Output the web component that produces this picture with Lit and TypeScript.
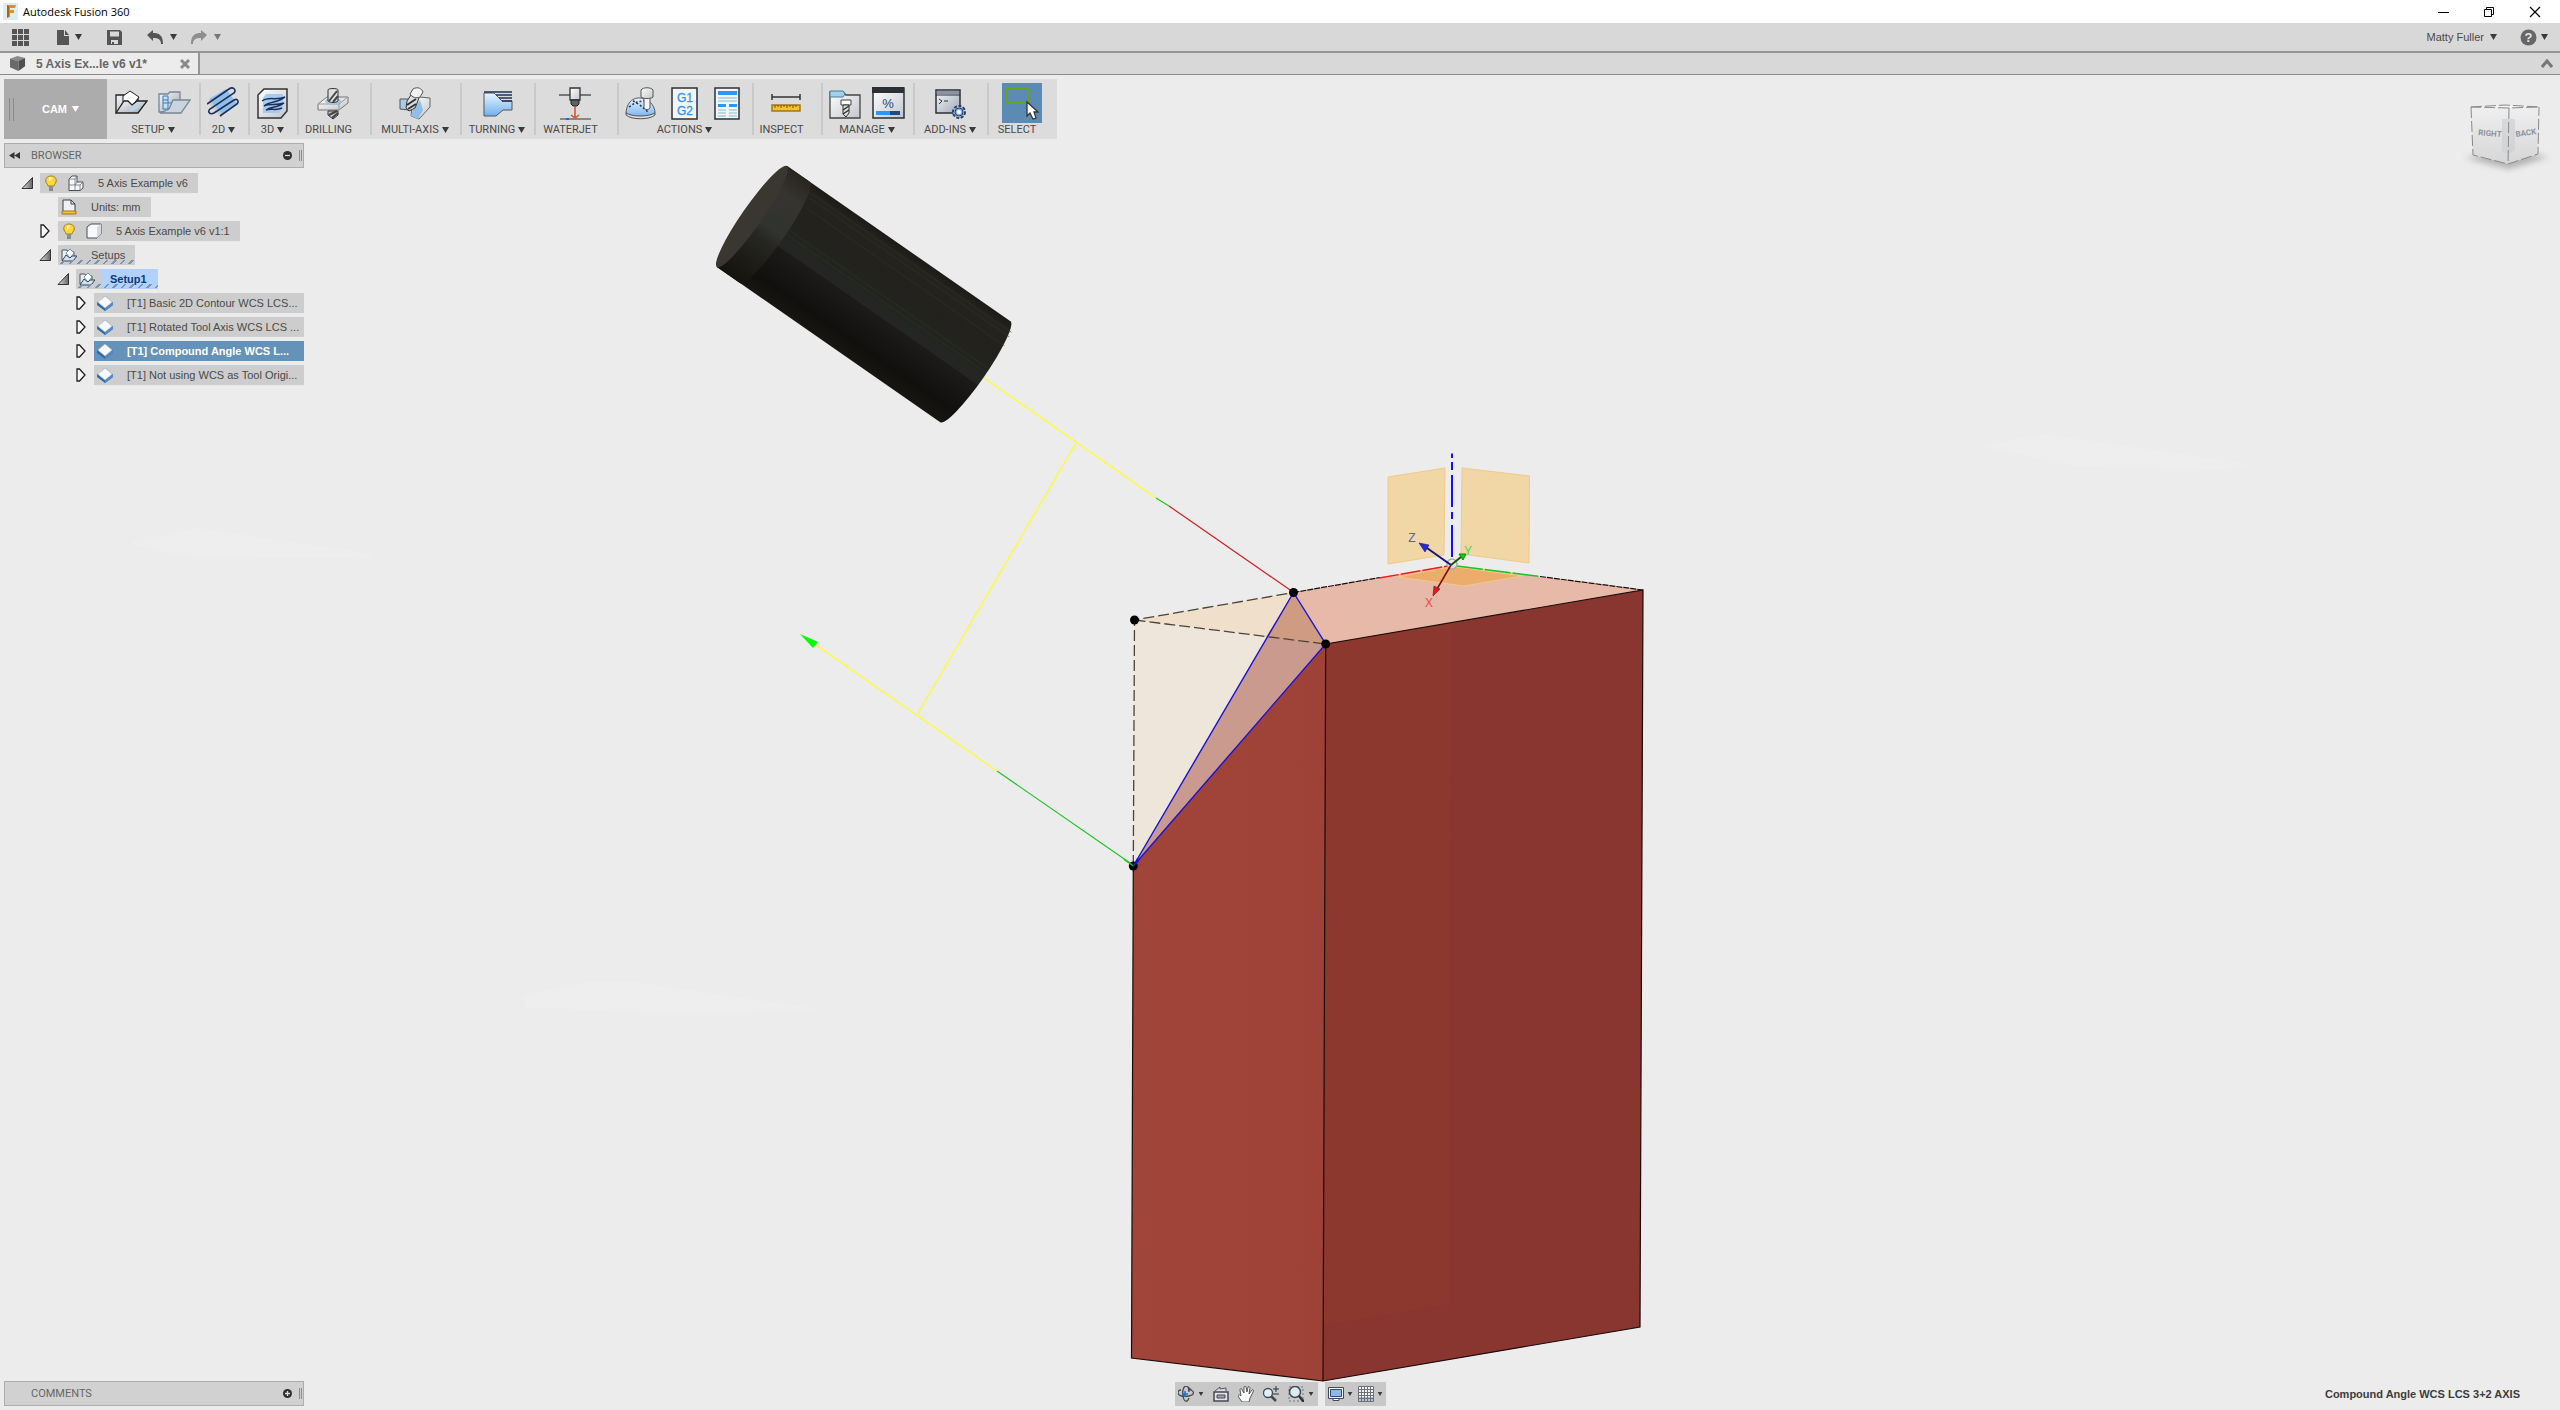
import { LitElement, html, svg, css, nothing, type TemplateResult } from "lit";
import { customElement, state } from "lit/decorators.js";

type Icon = TemplateResult;

interface Tool {
  name: string;
  icon: Icon;
  active?: boolean;
}

interface Group {
  label: string;
  menu: boolean;
  width: number;
  tools: Tool[];
}

interface Node {
  id: string;
  text: string;
  level: number;
  open?: boolean;
  leaf?: boolean;
  bulb?: boolean;
  icon: Icon;
  kind?: "hatch" | "setup" | "op";
}

const icons = {
  grid: svg`<g fill="#555"><path d="M0 0h5v5H0zM6 0h5v5H6zM12 0h5v5h-5zM0 6h5v5H0zM6 6h5v5H6zM12 6h5v5h-5zM0 12h5v5H0zM6 12h5v5H6zM12 12h5v5h-5z"/></g>`,
  file: svg`<path d="M1 1h7v6h5v9H1z" fill="#555"/><path d="M9 1l4 5H9z" fill="#555"/>`,
  save: svg`<path d="M1 1h13l2 2v13H1z" fill="#555"/><path d="M4 2.500h9v5H4z" fill="#d9d9d9"/><path d="M5 11h7v4H5z" fill="#d9d9d9"/><path d="M6 13h2v2H6z" fill="#555"/>`,
  undo: svg`<path d="M0 6l6-5v3c6 0 10 2 10 11h-2c0-5-3-6-8-6v3z" fill="#555"/>`,
  redo: svg`<path d="M16 6l-6-5v3C4 4 0 6 0 15h2c0-5 3-6 8-6v3z" fill="#8e8e8e"/>`,
  docCube: svg`<path d="M0 3l8-3 8 2-6 4z" fill="#8a8a8a"/><path d="M0 3l9 2.500v10.500L0 12z" fill="#6a6a6a"/><path d="M9 5.500L16 2v9l-7 5z" fill="#4f4f4f"/>`,
  setup: svg`
    <path d="M1 8h9l2 3h11v14H1z" fill="url(#steel)" stroke="#222" stroke-width="1.300"/>
    <path d="M8 9l7-5 9 6-7 9-9-4z" fill="#fff" stroke="#222"/>
    <path d="M1 26l8-12h4l4 4 5-4h10l-9 12z" fill="url(#steel)" stroke="#222" stroke-width="1.300"/>
    <path d="M13 17l4 5 8-7-2 6-7 4z" fill="#b9d3ea"/>`,
  setupFolder: svg`
    <path d="M1 7h9l2-2h10v20H1z" fill="url(#steel)" stroke="#788594" stroke-width="1.300"/>
    <path d="M5 9h5v7h5v6H5zM5 13h5M5 16h5M10 16v6" fill="#c4def4" stroke="#3f7db5"/>
    <path d="M2 26l9-4 4-9h17l-9 13z" fill="#c9d4df" stroke="#788594" stroke-width="1.300"/>`,
  mill2d: svg`
    <path d="M2 12v5l13 14v-5z" fill="#c9ccd0"/><path d="M2 12L19 2l12 16-16 9z" fill="#8fbfe9"/><path d="M15 27l16-9v5l-16 8z" fill="#dcdfe2"/>
    <path d="M0 17L22 2c4-3 8 1 5 4L3 22c-3 3 0 6 4 4L27 13c4-2 5 2 3 4L13 29" fill="none" stroke="#1d2f5c" stroke-width="1.600"/>`,
  mill3d: svg`
    <path d="M8 2h23v22l-6 7H2V8z" fill="url(#metal)" stroke="#333" stroke-width="1.500"/>
    <path d="M10 7h17v14l-4 5H7V11z" fill="#a5ccee"/>
    <path d="M6 14C13 9 20 14 29 10C22 16 14 14 8 19M8 19C14 16 20 19 28 16C22 21 16 19 10 23M10 23C15 21 20 24 26 21" fill="none" stroke="#1d2f5c" stroke-width="1.500"/>`,
  drill: svg`
    <path d="M1 17l9-7h21v6l-9 7H1z" fill="url(#metal)" stroke="#777"/><path d="M1 17h21l9-7M22 17v6" fill="none" stroke="#999"/>
    <ellipse cx="16" cy="14" rx="8" ry="3.500" fill="#9ac6ec"/>
    <path d="M11 3c0-2 10-2 10 0v11c-2 2-8 2-10 0z" fill="#dedede" stroke="#333"/><path d="M12 14l8-10M16 15l5-6" stroke="#444" stroke-width="2"/>
    <path d="M11 24h10v4l-5 4-5-4z" fill="#c9c9c9" stroke="#333"/><path d="M12 28l8-4M15 31l6-5" stroke="#444" stroke-width="2"/>`,
  multi: svg`
    <path d="M1 12h14l5 8-3 4L1 22z" fill="#a9cbe8" stroke="#555"/><path d="M14 12l6-2 11 1v9L20 32l-8-3z" fill="url(#metal)" stroke="#666"/>
    <path d="M14 22l7-9 3 10-5 9-7-3z" fill="#8fbfe9"/>
    <path d="M8 14l4-6 8 3-4 10-6 3-3-3z" fill="#ddd" stroke="#333"/><path d="M9 22l8-5M8 18l9-6" stroke="#333" stroke-width="2"/>
    <path d="M11 7l3-5c5-3 9 0 10 3l-3 5c-4 2-8 0-10-3z" fill="#f2f2f2" stroke="#555"/>`,
  turning: svg`
    <path d="M3 6h12l7 8h9v9h-9l-7 6H3z" fill="url(#sky)"/><path d="M3 6h10l8 8h10v9h-9l-7 6H3z" fill="none" stroke="#555"/>
    <path d="M3 5h28M15 8h16M18 11h13M21 14h10" stroke="#1d2f5c" stroke-width="1.500"/>`,
  waterjet: svg`
    <path d="M0 8h32" stroke="#555" stroke-width="1.500"/><path d="M11 1h10v12H11z" fill="url(#metal)" stroke="#333" stroke-width="1.300"/>
    <path d="M12 13h8v4l-2 2h-4l-2-2z" fill="#59616b" stroke="#222"/><path d="M16 19v11M12 28l4 3 4-3" stroke="#dd4b22" stroke-width="1.500" fill="none"/>
    <path d="M1 32h31" stroke="#888" stroke-width="2"/><path d="M7 32h3" stroke="#1c6fc4" stroke-width="2"/>`,
  simulate: svg`
    <path d="M1 26C2 12 12 9 19 12c7 2 11 8 11 14-5 7-24 7-29 0z" fill="url(#sky)" stroke="#555"/>
    <path d="M1 26c6 4 22 4 29 0v2c-5 5-24 5-29 0z" fill="#ddd" stroke="#555"/>
    <path d="M4 20c6-4 8-6 16-6M8 14c5 2 12 8 16 12" stroke="#1d2f5c" stroke-width="1.500" stroke-dasharray="2 2" fill="none"/>
    <path d="M19 10h6v11c-1 2-5 2-6 0z" fill="#f4f4f4" stroke="#555"/><path d="M16 3c2-3 10-3 12 0v7c-2 2-10 2-12 0z" fill="url(#metal)" stroke="#555"/>`,
  post: svg`
    <path d="M4 1h25v31H4z" fill="#f4f5f7" stroke="#2b2f36" stroke-width="1.500"/>
    <text x="17" y="15" text-anchor="middle" font-size="12" fill="#2d96fb" stroke="#2d96fb" stroke-width="0.300">G1</text>
    <text x="17" y="28" text-anchor="middle" font-size="12" fill="#2d96fb" stroke="#2d96fb" stroke-width="0.300">G2</text>`,
  sheet: svg`
    <path d="M4 1h24v31H4z" fill="#f4f5f7" stroke="#2b2f36" stroke-width="1.500"/>
    <path d="M7 4h19v4H7zM7 17h8v3H7zM18 17h8v3h-8z" fill="#2d96fb"/>
    <path d="M7 11h19M7 14h19M7 23h8M18 23h8M7 26h8M18 26h8M7 29h8M18 29h8" stroke="#7fbcc9"/>`,
  inspect: svg`
    <path d="M2 10h28M2 7v6M30 7v6" stroke="#333" stroke-width="1.500"/>
    <path d="M2 18h28v6H2z" fill="#f2c230" stroke="#a4741a" stroke-width="1.500"/><path d="M5 18v3M8 18v2M11 18v3M14 18v2M17 18v3M20 18v2M23 18v3M26 18v2" stroke="#7a5200"/>`,
  library: svg`
    <path d="M1 5h13l3 3h14v23H1z" fill="url(#metal)" stroke="#444" stroke-width="1.300"/><path d="M1 4h13l2 3-2 3H1z" fill="#9fd3ec" stroke="#4d7c92"/>
    <path d="M12 13h10v5H12z" fill="#fff" stroke="#444"/><path d="M14 18h6v8l-3 4-3-3z" fill="#ddd" stroke="#333"/><path d="M14 23l6-4M14 27l6-4" stroke="#333" stroke-width="1.500"/>`,
  template: svg`
    <path d="M1 1h31v30H1z" fill="url(#metal)" stroke="#2b2f36" stroke-width="1.500"/><path d="M0 0h32v6H0z" fill="#2b2f36"/>
    <text x="16" y="21" text-anchor="middle" font-size="13" fill="#234b78">%</text>
    <path d="M4 24h14v4H4z" fill="#2d96fb"/><path d="M18 24h10v4H18z" fill="#234b78"/>`,
  addins: svg`
    <path d="M2 3h24v23H2z" fill="url(#steel)" stroke="#2b2f36" stroke-width="1.500"/><path d="M3 4h22v3H3z" fill="#8d93a6"/><path d="M2 8h24" stroke="#2b2f36"/>
    <path d="M5 12l3 2-3 3M10 14h4" stroke="#333" fill="none"/>
    <circle cx="25" cy="25" r="6" fill="#a9c4ea" stroke="#26406b" stroke-width="2" stroke-dasharray="3 1.500"/><circle cx="25" cy="25" r="4" fill="#8fb1e2" stroke="#26406b"/><circle cx="25" cy="25" r="2" fill="#fff"/>`,
  select: svg`
    <path d="M1 1h21v15H1z" fill="none" stroke="#69a512" stroke-width="1.800"/>
    <path d="M21 15v14l3-3 3 6 3-1-2-6h4z" fill="#fff" stroke="#333" stroke-width="1.300"/>`,
  bulb: svg`<path d="M8 1c4 0 6 3 5 6-1 2-2 3-2 4H5c0-1-1-2-2-4C2 4 4 1 8 1z" fill="#ffd83d" stroke="#9a7a1c"/><path d="M6 3c1-1 2-1 3 0L6 7z" fill="#fffbe0"/><path d="M6 11h4v3H6z" fill="#8a8f98"/><path d="M6 15h4" stroke="#444"/>`,
  assembly: svg`<path d="M1 4l3-3h5v6h6v6l-3 2.500H1z" fill="#f7f8fa" stroke="#4a4f57"/><path d="M7 15.500V4l2-3M1 4h6M1 10h11v5.500M12 10l3-3M7 10l2-3" fill="none" stroke="#6a6f77" stroke-width="0.800"/>`,
  units: svg`<path d="M2 1h8l4 4v8H2z" fill="#f0f1f5" stroke="#3a3f47"/><path d="M10 1v4h4" fill="none" stroke="#3a3f47"/><path d="M1 12h14v3H1z" fill="#f2c230" stroke="#a4741a"/>`,
  body: svg`<path d="M1 4l4-3h10v10l-4 4H1z" fill="#f8f9fb" stroke="#4a4f57"/><path d="M11 15l4-4V1l-4 3z" fill="#d5d8dd"/>`,
  setupSmall: svg`<path d="M1 3h5l1 2h6v8H1z" fill="#e7edf3" stroke="#4a5667"/><path d="M5 6l4-4 4 4-4 5z" fill="#fff" stroke="#6d8fb5"/><path d="M1 14l4-6 4 3 2-2h5l-4 5z" fill="#cfe0ee" stroke="#3c4653"/>`,
  op: svg`<path d="M0 7l8 6 8-6v3l-8 6-8-6z" fill="#2f6aa8"/><path d="M8 13l8-6v3l-8 6z" fill="#4f8ac6"/><path d="M1 7l7-6 7 6-7 6z" fill="#fafafa" stroke="#a9bccd" stroke-width="0.800"/>`,
  orbit: svg`<g fill="none" stroke="#444b55" stroke-width="1.300"><path d="M11 12c-2 5-5 4-6-2S6 0 8 0s3 3 3 6"/><path d="M13 4c4 2 3 5-2 6s-11 0-11-3 2-3 3-3"/></g><path d="M7 5v6M4 8h6" stroke="#1c6fc4" stroke-width="1.500"/><path d="M11 1l3 3-4 1z" fill="#444b55"/>`,
  look: svg`<path d="M1 6h14v9H1z" fill="#e3e3e3" stroke="#444b55" stroke-width="1.500"/><path d="M4 9h8v3H4z" fill="#9aa6b5" stroke="#444b55"/><path d="M2 5l5-4v2l6-1v3" fill="#d5dbe0" stroke="#444b55" stroke-width="0.900"/>`,
  pan: svg`<path d="M4 16l-4-6c0-2 2-1 3 0L2 4c0-2 2-2 2 0l2 3V1c0-1 2-1 2 0l1 5 1-5c1-1 2 0 2 1l-1 6 3-4c1-1 2 0 1 2l-3 6-1 4z" fill="#fff" stroke="#444b55" stroke-width="0.900"/>`,
  zoom: svg`<circle cx="5" cy="7" r="4.500" fill="#e2f0f6" stroke="#444b55" stroke-width="1.300"/><path d="M8 10l5 5" stroke="#444b55" stroke-width="2.500"/><path d="M13 0v6M10 3h6M10 8h6" stroke="#333"/>`,
  fit: svg`<path d="M1 1h14v14H1z" fill="none" stroke="#777" stroke-dasharray="2 2"/><circle cx="7" cy="6" r="5.500" fill="#d8ecf2" stroke="#444b55" stroke-width="1.500"/><path d="M11 10l5 6" stroke="#333" stroke-width="2.500"/>`,
  display: svg`<path d="M.5 1.500h15v11H.5z" fill="#f2f2f2" stroke="#444b55"/><path d="M2.500 3.500h11v7h-11z" fill="#8fb8e8" stroke="#2a4d86"/><path d="M5 12.500h6v2H5z" fill="#fff" stroke="#444b55"/>`,
  gridView: svg`<path d="M0 0h16v16H0z" fill="#f4f4f4"/><path d="M0 11h16v5H0z" fill="#b9c1d0"/><path d="M.5 .5h15v15H.5zM3.500 0v16M6.500 0v16M9.500 0v16M12.500 0v16M0 3.500h16M0 6.500h16M0 9.500h16M0 12.500h16" fill="none" stroke="#6b7078"/>`,
};

const groups: Group[] = [
  { label: "SETUP", menu: true, width: 92, tools: [{ name: "New Setup", icon: icons.setup }, { name: "New Folder", icon: icons.setupFolder }] },
  { label: "2D", menu: true, width: 49, tools: [{ name: "2D milling", icon: icons.mill2d }] },
  { label: "3D", menu: true, width: 49, tools: [{ name: "3D milling", icon: icons.mill3d }] },
  { label: "DRILLING", menu: false, width: 73, tools: [{ name: "Drill", icon: icons.drill }] },
  { label: "MULTI-AXIS", menu: true, width: 90, tools: [{ name: "Multi-axis milling", icon: icons.multi }] },
  { label: "TURNING", menu: true, width: 74, tools: [{ name: "Turning profile", icon: icons.turning }] },
  { label: "WATERJET", menu: false, width: 83, tools: [{ name: "Cut", icon: icons.waterjet }] },
  { label: "ACTIONS", menu: true, width: 135, tools: [{ name: "Simulate", icon: icons.simulate }, { name: "Post Process", icon: icons.post }, { name: "Setup Sheet", icon: icons.sheet }] },
  { label: "INSPECT", menu: false, width: 69, tools: [{ name: "Measure", icon: icons.inspect }] },
  { label: "MANAGE", menu: true, width: 92, tools: [{ name: "Tool Library", icon: icons.library }, { name: "Template Library", icon: icons.template }] },
  { label: "ADD-INS", menu: true, width: 74, tools: [{ name: "Scripts and Add-Ins", icon: icons.addins }] },
  { label: "SELECT", menu: false, width: 70, tools: [{ name: "Select items", icon: icons.select, active: true }] },
];

const nodes: Node[] = [
  { id: "root", text: "5 Axis Example v6", level: 0, open: true, bulb: true, icon: icons.assembly },
  { id: "units", text: "Units: mm", level: 1, leaf: true, icon: icons.units },
  { id: "comp", text: "5 Axis Example v6 v1:1", level: 1, bulb: true, icon: icons.body },
  { id: "setups", text: "Setups", level: 1, open: true, icon: icons.setupSmall, kind: "hatch" },
  { id: "setup1", text: "Setup1", level: 2, open: true, icon: icons.setupSmall, kind: "setup" },
  { id: "op1", text: "[T1] Basic 2D Contour WCS LCS...", level: 3, icon: icons.op, kind: "op" },
  { id: "op2", text: "[T1] Rotated Tool Axis WCS LCS ...", level: 3, icon: icons.op, kind: "op" },
  { id: "op3", text: "[T1] Compound Angle WCS L...", level: 3, icon: icons.op, kind: "op" },
  { id: "op4", text: "[T1] Not using WCS as Tool Origi...", level: 3, icon: icons.op, kind: "op" },
];

const caret = html`<svg class="caret" viewBox="0 0 7 6" aria-hidden="true"><path d="M0 0h7L3.500 6z" fill="currentColor" /></svg>`;
const noCaret = html`<span class="caret"></span>`;
const small = (i: Icon, name = "i16") => html`<svg class=${name} viewBox="0 0 17 17" aria-hidden="true">${i}</svg>`;

@customElement("app-root")
export class AppRoot extends LitElement {
  @state() private selected = "op3";

  static styles = css`
    :host {
      display: block;
      font: 11px/14px "Liberation Sans", Arial, sans-serif;
      color: #4a4a4a;
    }
    * { box-sizing: border-box; }
    button {
      font: inherit;
      color: inherit;
      background: none;
      border: 0;
      padding: 0;
      margin: 0;
      display: flex;
      align-items: center;
      white-space: nowrap;
    }
    svg { display: block; flex: none; }
    .app { display: flex; flex-direction: column; height: 100vh; background: #ececec; }
    .caret { width: 7px; height: 6px; flex: none; color: #3a3a3a; }
    .i16 { width: 17px; height: 17px; }
    .i15 { width: 16px; height: 16px; }
    .narrow { font-family: Roboto, "Liberation Sans", sans-serif; font-size: 11px; }

    .title { height: 23px; flex: none; display: flex; align-items: center; background: #fff; padding: 0 9px 0 3px; gap: 5px; color: #000; }
    .title h1 { margin: 0; flex: 1; font: 11px/16px "Open Sans", "Noto Sans", sans-serif; }
    .logo { width: 15px; height: 17px; }
    .win { display: flex; gap: 24px; }
    .win svg { width: 22px; height: 12px; }

    .quick { height: 30px; flex: none; display: flex; align-items: center; background: #d8d8d8; border-bottom: 2px solid #969696; padding: 0 12px; }
    .quick button { gap: 6px; }
    .tools { display: flex; flex: 1; align-items: center; gap: 24px; }
    .tools .file { padding-left: 3px; gap: 2px; }
    .tools .last .caret { color: #777; }
    .tools .history { display: flex; gap: 14px; }
    .account { display: flex; align-items: center; gap: 23px; }
    .account .help { gap: 4px; }

    .tabs { height: 22px; flex: none; display: flex; align-items: center; justify-content: space-between; background: #d8d8d8; border-bottom: 1px solid #8c8c8c; padding-right: 7px; }
    .tab { height: 21px; width: 200px; display: flex; align-items: center; gap: 10px; padding: 0 8px 0 10px; background: #ececec; border-right: 2px solid #969696; font-weight: bold; font-size: 12px; color: #666; }
    .tab .name { flex: 1; }
    .tab .x { width: 10px; height: 10px; }
    .chev { width: 12px; height: 9px; }

    .work { position: relative; flex: 1; min-height: 0; display: flex; flex-direction: column; padding: 4px; }
    .scene { position: absolute; inset: 0; width: 100%; height: 100%; }
    .over { position: relative; }

    .ribbon { align-self: flex-start; display: flex; height: 60px; background: #dcdcdc; }
    .workspace { width: 103px; background: #acacac; color: #fff; font-weight: bold; padding-left: 5px; }
    .grip { width: 5px; height: 23px; border: solid #8b8b8b; border-width: 0 1px; }
    .workspace .label { flex: 1; display: flex; align-items: center; justify-content: center; gap: 5px; font-size: 11px; }
    .workspace .caret { color: #fff; }
    .group { display: flex; flex-direction: column; align-items: center; padding-top: 4px; }
    .group + .group { background: linear-gradient(#c9c9c9, #c9c9c9) 0 4px / 2px 52px no-repeat; }
    .row { height: 40px; display: flex; align-items: center; gap: 10px; }
    .row svg { width: 33px; height: 33px; }
    .row .active { width: 40px; height: 40px; justify-content: center; background: #5b8ab5; }
    .group .menu { gap: 3px; height: 14px; }

    .main { flex: 1; min-height: 0; display: flex; justify-content: space-between; padding-top: 4px; }
    .browser { width: 300px; }
    .bar { height: 25px; display: flex; align-items: center; border: 1px solid #adadad; background: #d1d1d1; padding: 0 1px 0 4px; color: #666; }
    .bar h2 { margin: 0; flex: 1; font-weight: normal; line-height: 14px; }
    .bar .fold { width: 22px; }
    .bar .fold svg { width: 11px; height: 7px; }
    .bar .round { width: 9px; height: 9px; margin-right: 7px; }
    .bar .edge { width: 3px; height: 11px; border: solid #8b8b8b; border-width: 0 1px; }
    .tree { list-style: none; margin: 0; padding: 5px 0 0 16px; display: grid; gap: 4px; }
    .tree li { display: flex; height: 20px; }
    .l1 { padding-left: 18px; }
    .l2 { padding-left: 36px; }
    .l3 { padding-left: 54px; }
    .twist { width: 20px; height: 20px; flex: none; padding-left: 1px; }
    .twist svg { width: 12px; height: 14px; }
    .item { position: relative; height: 20px; background: #cdcdcd; padding: 0 10px 0 3px; }
    .item .bulb { margin-right: 9px; }
    .item .text { margin-left: 14px; }
    .item.op { flex: 1; padding-right: 4px; }
    .item.sel { background: #6592b8; color: #fff; font-weight: bold; }
    .item.setup { padding-right: 0; }
    .item.setup .text { margin-left: 6px; padding: 3px 11px 3px 9px; background: #b1d2ff; color: #0f3878; font-weight: bold; }
    .hatch::after {
      content: "";
      position: absolute;
      left: 0; right: 0; bottom: 1px;
      height: 4px;
      background: repeating-linear-gradient(135deg, transparent 0 4px, #7d92b4 4px 6px);
    }
    .cube { width: 110px; height: 80px; margin-top: -42px; }
    .cube text { font: bold 8px Roboto, "Liberation Sans", sans-serif; }

    .foot { display: grid; grid-template-columns: 1fr auto 1fr; align-items: center; }
    .foot .bar { width: 300px; padding-left: 26px; }
    .nav { display: flex; gap: 7px; }
    .nav > div { display: flex; align-items: center; height: 24px; background: #c8c8c8; padding: 0 4px 0 3px; gap: 9px; }
    .nav .view { gap: 5px; padding-right: 3px; }
    .nav button { gap: 4px; }
    .nav .view button { gap: 3px; }
    .nav .caret { width: 6px; height: 4px; }
    .status { justify-self: end; padding-right: 36px; font-weight: bold; color: #3c3c3c; }
  `;

  private scene() {
    return html`<svg class="scene" viewBox="0 75 2560 1335" preserveAspectRatio="xMidYMid slice" role="img" aria-label="Machining scene">
      <defs>
        <linearGradient id="steel" x1="0" y1="0" x2="1" y2="1"><stop offset="0" stop-color="#f6f7fa" /><stop offset="1" stop-color="#9fa8b6" /></linearGradient>
        <linearGradient id="metal" x1="0" y1="0" x2="1" y2="1"><stop offset="0" stop-color="#ffffff" /><stop offset="1" stop-color="#c2c6cd" /></linearGradient>
        <linearGradient id="sky" x1="0" y1="0" x2="0" y2="1"><stop offset="0" stop-color="#e9f4ff" /><stop offset="1" stop-color="#6fb0ee" /></linearGradient>
        <linearGradient id="tw" x1="0" y1="0" x2="1" y2="0"><stop offset="0" stop-color="#e0e0e0" /><stop offset="1" stop-color="#666" /></linearGradient>
        <linearGradient id="cubeSide" x1="0" y1="0" x2="0" y2="1"><stop offset="0" stop-color="#efefef" /><stop offset="1" stop-color="#d6d6d6" /></linearGradient>
        <linearGradient id="barrel" gradientUnits="userSpaceOnUse" x1="0" y1="-62" x2="0" y2="62">
          <stop offset="0" stop-color="#1b1a16" /><stop offset=".08" stop-color="#25231e" /><stop offset=".3" stop-color="#22211d" />
          <stop offset=".44" stop-color="#22241f" /><stop offset=".5" stop-color="#242624" /><stop offset=".57" stop-color="#242524" />
          <stop offset=".58" stop-color="#1c1b1a" /><stop offset=".86" stop-color="#11100e" /><stop offset="1" stop-color="#171612" />
        </linearGradient>
        <linearGradient id="collar" gradientUnits="userSpaceOnUse" x1="0" y1="-62" x2="0" y2="62">
          <stop offset="0" stop-color="#28251f" /><stop offset=".2" stop-color="#36342f" /><stop offset=".5" stop-color="#30332f" />
          <stop offset=".6" stop-color="#262622" /><stop offset="1" stop-color="#14130e" />
        </linearGradient>
        <linearGradient id="leftFace" x1="0" y1="0" x2="1" y2="0"><stop offset="0" stop-color="#a1453a" /><stop offset="1" stop-color="#9e4238" /></linearGradient>
      </defs>
      <g fill="#eeeeee">
        <path d="M523 995l64-13h46l192 28-30 2-145 1-123-6z" />
        <path d="M130 543l65-15 180 26-10 5-190-3z" />
        <path d="M1980 446l65-12 205 30-25 6-150-4z" />
      </g>

      <path d="M983 377L1156 498M1076 443L917 715M816 645L997 771" stroke="#ffff1e" stroke-width="1.200" fill="none" />
      <path d="M1156 498L1169 506M997 771L1133 865" stroke="#1fc41f" stroke-width="1.200" />
      <path d="M1169 506L1293 592" stroke="#d02020" stroke-width="1.200" />
      <path d="M800 634L818 642L813 648z" fill="#0f0" />

      <g transform="translate(752 216.500) rotate(34.800)">
        <path d="M0 -61.500H272A10 61.500 0 0 1 272 61.500H0z" fill="url(#barrel)" />
        <path d="M0 -61.500H28A10 61.500 0 0 1 28 61.500H0z" fill="url(#collar)" />
        <path d="M37 -48H280M36 -53H279M38 -38H281M38 -10H281M38 -5H281" stroke="#343229" stroke-width="0.800" opacity=".7" />
        <ellipse rx="10" ry="61.500" fill="#3a3731" />
      </g>

      <path d="M1134.500 620L1293.500 592.500L1325.700 644z" fill="#f0dfcb" />
      <path d="M1134.500 620L1325.700 644L1133.300 866z" fill="#eee6da" />
      <path d="M1293.500 592.500L1451.500 565L1643 590L1325.700 644z" fill="#e6b9a9" />
      <path d="M1133.300 866L1325.700 644L1323 1381L1131.500 1358z" fill="url(#leftFace)" />
      <path d="M1325.700 644L1643 590L1640 1327L1323 1381z" fill="#8a3630" />
      <path d="M1325.700 644L1451 623L1449 1304L1324 1325z" fill="#8c382f" />
      <path d="M1293.500 592.500L1325.700 644L1133.300 866z" fill="#cb9a8e" />
      <path d="M1293.500 592.500L1325.700 644L1266 637z" fill="#d09b83" />

      <g stroke="#1a0a08" fill="none" stroke-width="1.200">
        <path d="M1325.700 644L1643 590L1640 1327L1323 1381L1131.500 1358L1133.300 866M1325.700 644L1323 1381" />
        <path d="M1293.500 592.500L1380 577.500M1540 576.500L1643 590" stroke-dasharray="6 1" />
      </g>
      <path d="M1133.300 866L1134.500 620L1293.500 592.500M1134.500 620L1325.700 644" fill="none" stroke="#4a443c" stroke-width="1.300" stroke-dasharray="11 4" />
      <path d="M1293.500 592.500L1325.700 644L1133.300 866z" fill="none" stroke="#1414d8" stroke-width="1.400" />
      <circle cx="1293.500" cy="592.500" r="4.500" /><circle cx="1134.500" cy="620" r="4.500" /><circle cx="1325.700" cy="644" r="4.500" /><circle cx="1133.300" cy="866" r="4.500" />
      <path d="M1124 859.500L1133.500 866" stroke="#1fc41f" stroke-width="1.500" /><path d="M1133 867L1138 858M1133 867L1139 860" stroke="#1414d8" stroke-width="1.500" />

      <g fill="#f6c05f" fill-opacity=".5" stroke="#f3c987" stroke-width="1">
        <path d="M1388 477L1445 468L1444 555L1388 564z" /><path d="M1462 468L1529.500 476L1529 563L1461 554z" />
        <path d="M1398 577L1444 568L1457 567L1522 576L1464 586z" fill="#f0a030" />
      </g>
      <path d="M1452 453.500V458M1452 462V470M1452 475V507M1452 512V519M1452 525V557" stroke="#1010f5" stroke-width="2" />
      <path d="M1379 578L1448 566" stroke="#ee1c1c" stroke-width="1.400" stroke-dasharray="20 2" />
      <path d="M1457 566L1540 576.500" stroke="#18c818" stroke-width="1.400" stroke-dasharray="26 2" />
      <circle cx="1452" cy="564" r="5" fill="#eee" fill-opacity=".6" stroke="#aaa" stroke-width="1.500" />
      <path d="M1451 565L1427 548" stroke="#16166e" stroke-width="2" /><path d="M1419 543L1429 545L1425 552z" fill="#2a2ad0" stroke="#16166e" stroke-width="0.600" />
      <path d="M1451 565L1461 557" stroke="#0b5a0b" stroke-width="2" /><path d="M1466 554L1459 554L1463 560z" fill="#0bd20b" stroke="#0b8a0b" />
      <path d="M1451 565L1437 589" stroke="#7a0d0d" stroke-width="1.500" /><path d="M1433 596L1434 586L1440 589z" fill="#e01c1c" stroke="#7a0d0d" stroke-width="0.600" />
      <g font-size="12" text-anchor="middle">
        <text x="1412" y="542" fill="#5656d8">Z</text><text x="1468" y="555" fill="#3ce03c">Y</text><text x="1429" y="607" fill="#f04a3c">X</text>
      </g>
    </svg>`;
  }

  private group(g: Group) {
    return html`<div class="group" style="width:${g.width}px">
      <div class="row">
        ${g.tools.map((t) => html`<button class=${t.active ? "active" : "tool"} title=${t.name} aria-label=${t.name}>
          <svg viewBox="0 0 33 33" aria-hidden="true">${t.icon}</svg>
        </button>`)}
      </div>
      <button class="menu narrow">${g.label}${g.menu ? caret : noCaret}</button>
    </div>`;
  }

  private node(n: Node) {
    const selected = n.id === this.selected;
    const hatch = n.kind === "hatch" || n.kind === "setup";
    const twist = n.open
      ? html`<svg viewBox="0 0 12 14"><path d="M1 12.500L11.500 1.500V12.500z" fill="url(#tw)" stroke="#333" /></svg>`
      : html`<svg viewBox="0 0 12 14"><path d="M2 1h2.500L10 7L4.500 13H2z" fill="#f8f8f8" stroke="#222" stroke-width="1.300" /></svg>`;
    return html`<li class="l${n.level}">
      ${n.leaf ? html`<span class="twist"></span>` : html`<button class="twist" aria-label="Expand ${n.text}">${twist}</button>`}
      <button class="item ${n.kind ?? ""} ${hatch ? "hatch" : ""} ${selected ? "sel" : ""}" @click=${() => (this.selected = n.id)}>
        ${n.bulb ? html`<svg class="i15 bulb" viewBox="0 0 16 16">${icons.bulb}</svg>` : nothing}
        <svg class="i15" viewBox="0 0 16 16">${n.icon}</svg>
        <span class="text">${n.text}</span>
      </button>
    </li>`;
  }

  private navButton(icon: Icon, name: string, menu = false) {
    return html`<button aria-label=${name}><svg class="i15" viewBox="0 0 16 16">${icon}</svg>${menu ? caret : nothing}</button>`;
  }

  render() {
    return html`<div class="app">
      <header class="title">
        <svg class="logo" viewBox="0 0 15 17" aria-hidden="true"><path d="M0 0h15v17H0z" fill="#d9eef6" /><path d="M4 2h9l-1 3H7v2h4v3H7v4l-3 1z" fill="#e8892b" /><path d="M4 2l2 1v10l-2 2z" fill="#b75f14" /></svg>
        <h1>Autodesk Fusion 360</h1>
        <div class="win">
          <button aria-label="Minimize"><svg viewBox="0 0 22 12"><path d="M1 6.500h11" stroke="#000" /></svg></button>
          <button aria-label="Restore"><svg viewBox="0 0 22 12"><path d="M1.500 3.500h7v7h-7zM3.500 3.500v-2h7v7h-2" fill="none" stroke="#000" /></svg></button>
          <button aria-label="Close"><svg viewBox="0 0 22 12"><path d="M1 1l10 10M11 1L1 11" stroke="#000" stroke-width="1.200" /></svg></button>
        </div>
      </header>

      <nav class="quick" aria-label="Quick access">
        <div class="tools">
          <button aria-label="Data panel">${small(icons.grid)}</button>
          <button class="file" aria-label="File">${small(icons.file)}${caret}</button>
          <button aria-label="Save">${small(icons.save)}</button>
          <div class="history">
            <button aria-label="Undo">${small(icons.undo)}${caret}</button>
            <button class="last" aria-label="Redo">${small(icons.redo)}${caret}</button>
          </div>
        </div>
        <div class="account">
          <button>Matty Fuller${caret}</button>
          <button class="help" aria-label="Help"><svg class="i16" viewBox="0 0 17 17"><circle cx="8.500" cy="8.500" r="8" fill="#666" /><text x="8.500" y="13" text-anchor="middle" font-size="13" font-weight="bold" fill="#e4e4e4">?</text></svg>${caret}</button>
        </div>
      </nav>

      <div class="tabs">
        <div class="tab">${small(icons.docCube, "i15")}<span class="name">5 Axis Ex...le v6 v1*</span>
          <button aria-label="Close tab"><svg class="x" viewBox="0 0 10 10"><path d="M1 1l8 8M9 1L1 9" stroke="#8a8a8a" stroke-width="3" /></svg></button>
        </div>
        <button aria-label="Collapse"><svg class="chev" viewBox="0 0 12 9"><path d="M1 8l5-6 5 6" fill="none" stroke="#777" stroke-width="3" /></svg></button>
      </div>

      <main class="work">
        ${this.scene()}
        <div class="ribbon over">
          <button class="workspace"><span class="grip"></span><span class="label">CAM${caret}</span></button>
          ${groups.map((g) => this.group(g))}
        </div>
        <div class="main over">
          <section class="browser">
            <div class="bar">
              <button class="fold" aria-label="Collapse browser"><svg viewBox="0 0 11 7"><path d="M5.500 0v7L0 3.500zM11 0v7L5.500 3.500z" fill="#333" /></svg></button>
              <h2 class="narrow">BROWSER</h2>
              <button aria-label="Minimize browser"><svg class="round" viewBox="0 0 9 9"><circle cx="4.500" cy="4.500" r="4.500" fill="#2e2e2e" /><path d="M2 4.500h5" stroke="#ddd" stroke-width="1.300" /></svg></button>
              <span class="edge"></span>
            </div>
            <ul class="tree">${nodes.map((n) => this.node(n))}</ul>
          </section>
          <svg class="cube" viewBox="-5 0 110 80" role="img" aria-label="View cube">
            <defs><filter id="soft" x="-20%" y="-50%" width="140%" height="200%"><feGaussianBlur stdDeviation="3" /></filter></defs>
            <path d="M14 57L61 49L97 56L58 68z" fill="#999" opacity=".7" filter="url(#soft)" />
            <path d="M20 6L58 7L57 63L22 54z" fill="url(#cubeSide)" /><path d="M58 7L88 6L87 53L57 63z" fill="url(#cubeSide)" />
            <path d="M20 6L54 4L88 6L58 7z" fill="#f2f2f2" />
            <path d="M51 18L64 18L64 49L57 53L51 51z" fill="#cdd0d6" opacity=".7" />
            <path d="M20 6L54 4L88 6L58 7zM20 6L22 54L57 63L87 53L88 6M58 7L57 63" fill="none" stroke="#8a8a8a" stroke-dasharray="11 3" />
            <text transform="translate(27 34) rotate(5)" fill="#8f939b">RIGHT</text><text transform="translate(65 36) rotate(-8)" fill="#8f939b">BACK</text>
          </svg>
        </div>
        <footer class="foot over">
          <div class="bar">
            <h2 class="narrow">COMMENTS</h2>
            <button aria-label="Add comment"><svg class="round" viewBox="0 0 9 9"><circle cx="4.500" cy="4.500" r="4.500" fill="#2e2e2e" /><path d="M2 4.500h5M4.500 2v5" stroke="#ddd" stroke-width="1.300" /></svg></button>
            <span class="edge"></span>
          </div>
          <nav class="nav" aria-label="Navigation">
            <div>
              ${this.navButton(icons.orbit, "Orbit", true)} ${this.navButton(icons.look, "Look at")} ${this.navButton(icons.pan, "Pan")}
              ${this.navButton(icons.zoom, "Zoom")} ${this.navButton(icons.fit, "Fit", true)}
            </div>
            <div class="view">${this.navButton(icons.display, "Display settings", true)} ${this.navButton(icons.gridView, "Grid and snaps", true)}</div>
          </nav>
          <div class="status">Compound Angle WCS LCS 3+2 AXIS</div>
        </footer>
      </main>
    </div>`;
  }
}
